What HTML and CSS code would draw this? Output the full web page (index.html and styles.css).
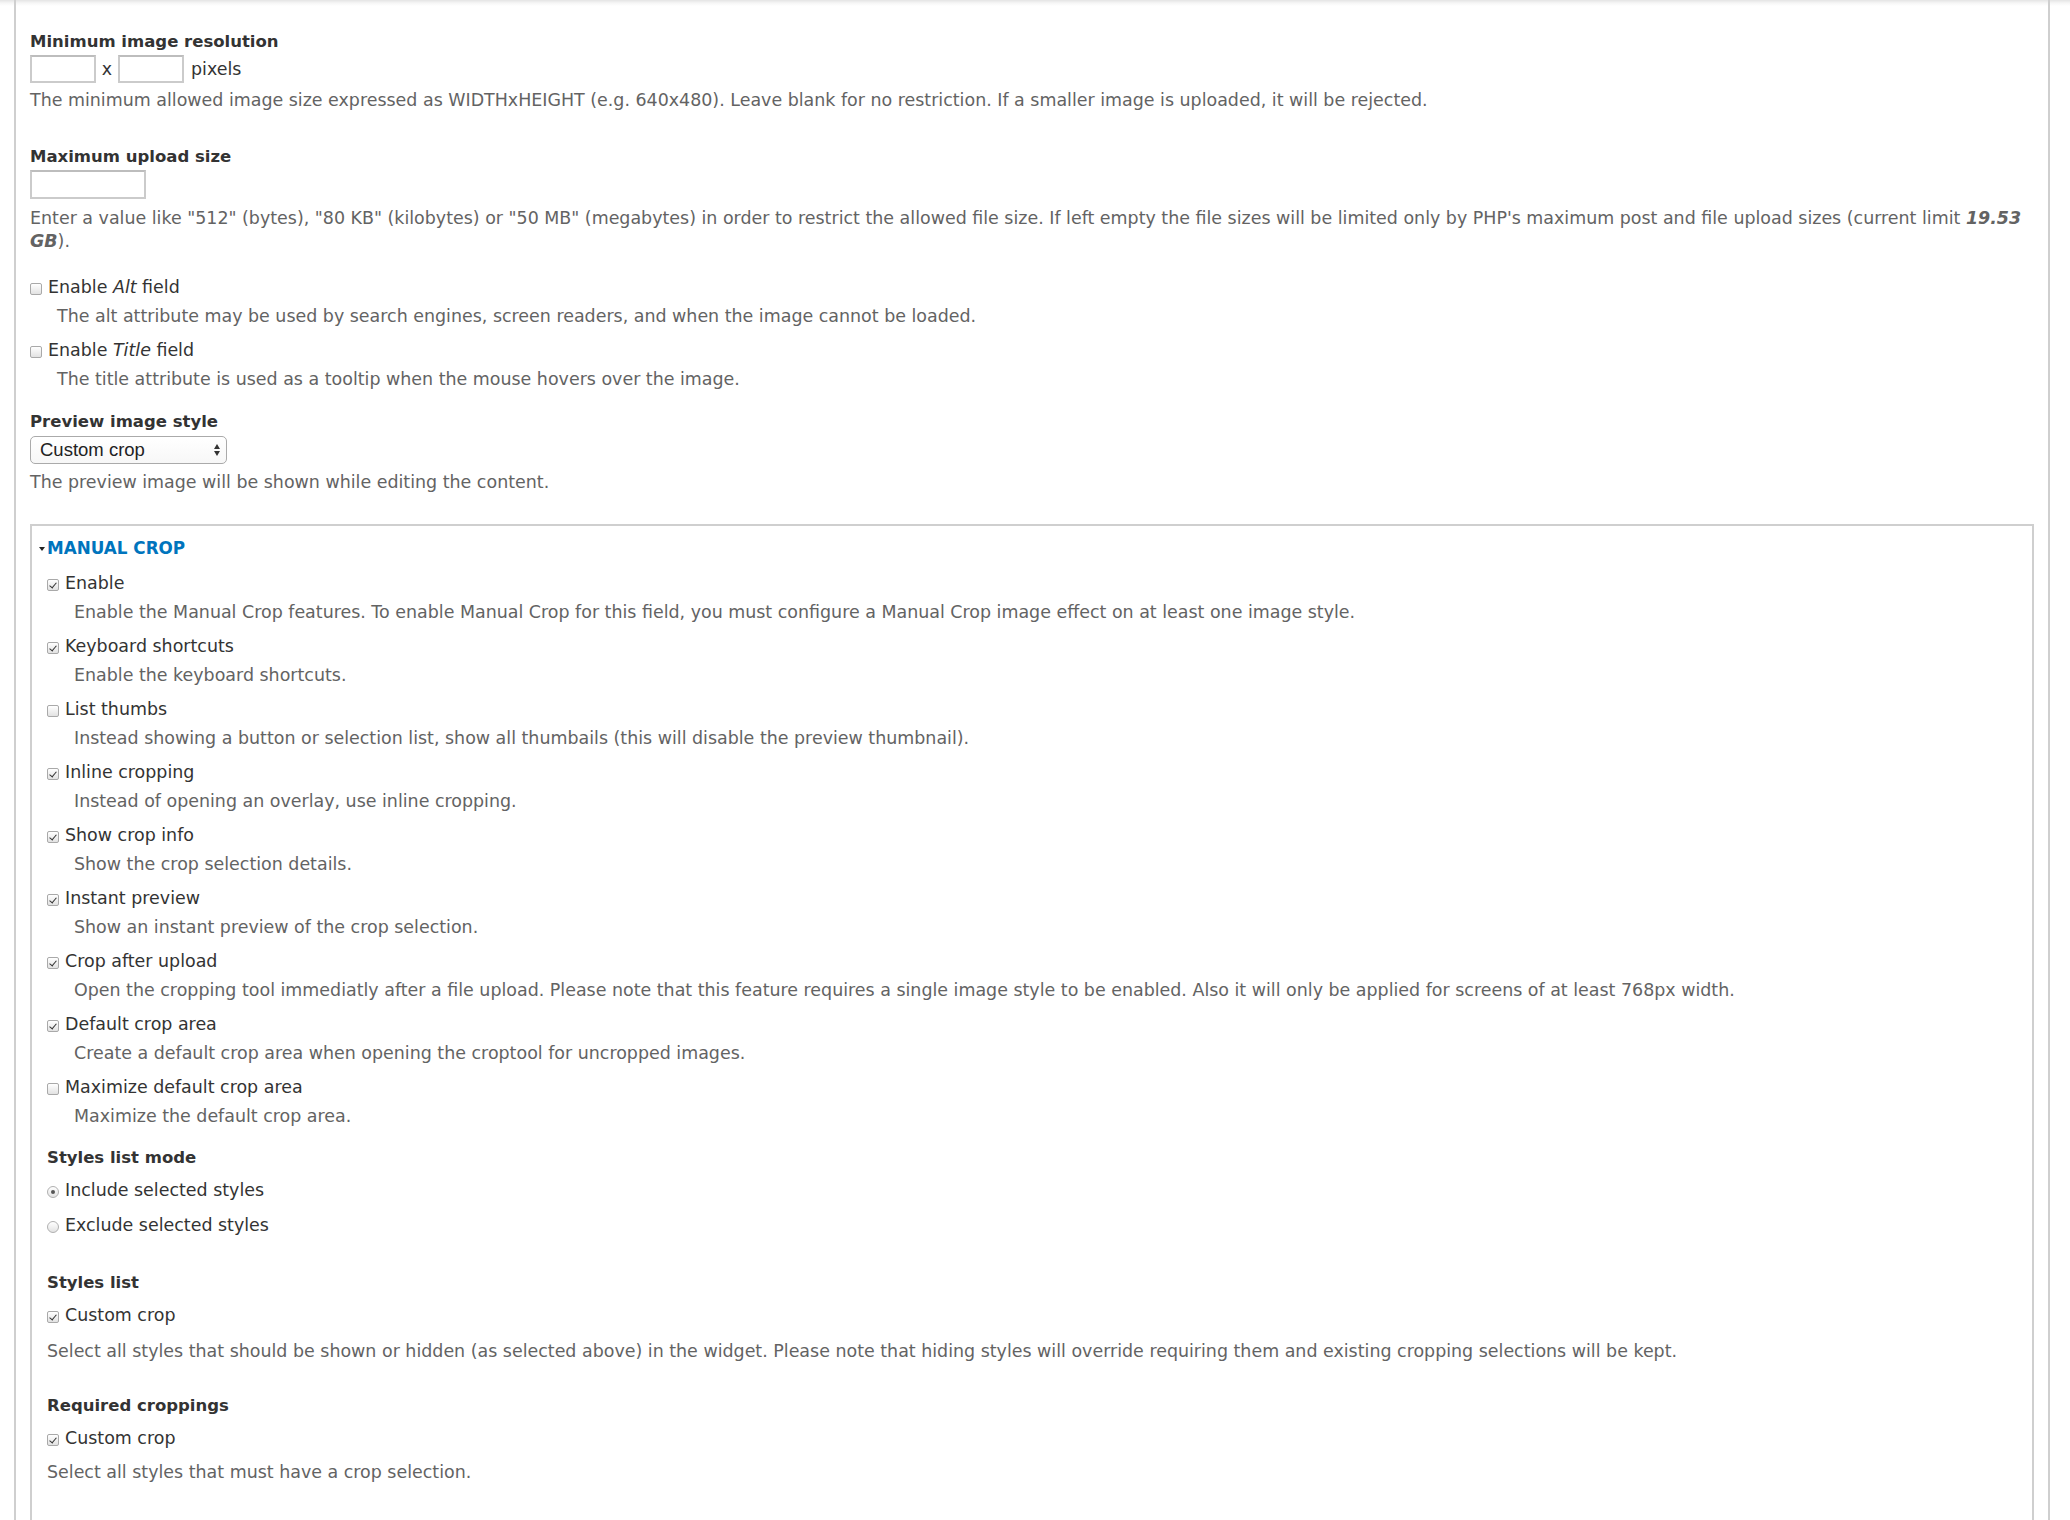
FILE: index.html
```html
<!DOCTYPE html>
<html lang="en">
<head>
<meta charset="utf-8">
<title>Image field settings</title>
<link rel="stylesheet" href="styles.css">
</head>
<body>
<div class="page">
  <div class="item">
    <div class="title">Minimum image resolution</div>
    <div class="res-row">
      <span class="input input-sm"></span>
      <span class="times">x</span>
      <span class="input input-sm"></span>
      <span class="unit">pixels</span>
    </div>
    <div class="desc gap-6">The minimum allowed image size expressed as WIDTHxHEIGHT (e.g. 640x480). Leave blank for no restriction. If a smaller image is uploaded, it will be rejected.</div>
  </div>

  <div class="item gap-35">
    <div class="title">Maximum upload size</div>
    <span class="input input-md"></span>
    <div class="desc wrap gap-8">Enter a value like "512" (bytes), "80 KB" (kilobytes) or "50 MB" (megabytes) in order to restrict the allowed file size. If left empty the file sizes will be limited only by PHP's maximum post and file upload sizes (current limit <em class="strong">19.53</em> <em class="strong">GB</em>).</div>
  </div>

  <div class="check-item gap-24">
    <div class="check"><span class="box"></span><span class="lbl">Enable <em>Alt</em> field</span></div>
    <div class="desc sub">The alt attribute may be used by search engines, screen readers, and when the image cannot be loaded.</div>
  </div>
  <div class="check-item gap-12">
    <div class="check"><span class="box"></span><span class="lbl">Enable <em>Title</em> field</span></div>
    <div class="desc sub">The title attribute is used as a tooltip when the mouse hovers over the image.</div>
  </div>

  <div class="item gap-21">
    <div class="title">Preview image style</div>
    <div class="select"><span class="select-text">Custom crop</span><span class="arrows"><span class="up"></span><span class="down"></span></span></div>
    <div class="desc gap-7">The preview image will be shown while editing the content.</div>
  </div>

  <div class="fieldset">
    <div class="legend"><span class="tri"></span>MANUAL CROP</div>

    <div class="check-item gap-13">
      <div class="check"><span class="box on"></span><span class="lbl">Enable</span></div>
      <div class="desc sub">Enable the Manual Crop features. To enable Manual Crop for this field, you must configure a Manual Crop image effect on at least one image style.</div>
    </div>
    <div class="check-item gap-12">
      <div class="check"><span class="box on"></span><span class="lbl">Keyboard shortcuts</span></div>
      <div class="desc sub">Enable the keyboard shortcuts.</div>
    </div>
    <div class="check-item gap-12">
      <div class="check"><span class="box"></span><span class="lbl">List thumbs</span></div>
      <div class="desc sub">Instead showing a button or selection list, show all thumbails (this will disable the preview thumbnail).</div>
    </div>
    <div class="check-item gap-12">
      <div class="check"><span class="box on"></span><span class="lbl">Inline cropping</span></div>
      <div class="desc sub">Instead of opening an overlay, use inline cropping.</div>
    </div>
    <div class="check-item gap-12">
      <div class="check"><span class="box on"></span><span class="lbl">Show crop info</span></div>
      <div class="desc sub">Show the crop selection details.</div>
    </div>
    <div class="check-item gap-12">
      <div class="check"><span class="box on"></span><span class="lbl">Instant preview</span></div>
      <div class="desc sub">Show an instant preview of the crop selection.</div>
    </div>
    <div class="check-item gap-12">
      <div class="check"><span class="box on"></span><span class="lbl">Crop after upload</span></div>
      <div class="desc sub">Open the cropping tool immediatly after a file upload. Please note that this feature requires a single image style to be enabled. Also it will only be applied for screens of at least 768px width.</div>
    </div>
    <div class="check-item gap-12">
      <div class="check"><span class="box on"></span><span class="lbl">Default crop area</span></div>
      <div class="desc sub">Create a default crop area when opening the croptool for uncropped images.</div>
    </div>
    <div class="check-item gap-12">
      <div class="check"><span class="box"></span><span class="lbl">Maximize default crop area</span></div>
      <div class="desc sub">Maximize the default crop area.</div>
    </div>

    <div class="item gap-20">
      <div class="title">Styles list mode</div>
      <div class="check gap-10"><span class="radio on"></span><span class="lbl">Include selected styles</span></div>
      <div class="check gap-13"><span class="radio"></span><span class="lbl">Exclude selected styles</span></div>
    </div>

    <div class="item gap-36">
      <div class="title">Styles list</div>
      <div class="check gap-10"><span class="box on"></span><span class="lbl">Custom crop</span></div>
      <div class="desc gap-14">Select all styles that should be shown or hidden (as selected above) in the widget. Please note that hiding styles will override requiring them and existing cropping selections will be kept.</div>
    </div>

    <div class="item gap-33">
      <div class="title">Required croppings</div>
      <div class="check gap-10"><span class="box on"></span><span class="lbl">Custom crop</span></div>
      <div class="desc gap-12">Select all styles that must have a crop selection.</div>
    </div>
  </div>
</div>
</body>
</html>
```

FILE: styles.css
```css
html {
  background: #fff linear-gradient(to bottom, #e4e4e4 0, #f6f6f6 3px, #fff 6px) no-repeat;
  background-size: 100% 8px;
}

body {
  margin: 0;
  font-family: "DejaVu Sans", "Open Sans", sans-serif;
  font-size: 17.45px;
  line-height: 22px;
  color: #333;
}

.page {
  margin-left: 14px;
  width: 2004px;
  min-height: 1520px;
  box-sizing: content-box;
  border-left: 2px solid #cfcfcf;
  border-right: 2px solid #cfcfcf;
  padding: 31px 14px 0 14px;
}

.item, .check-item { display: block; }

.gap-6 { margin-top: 6px; }
.gap-7 { margin-top: 7px; }
.gap-8 { margin-top: 8px; }
.gap-10 { margin-top: 10px; }
.gap-12 { margin-top: 12px; }
.gap-13 { margin-top: 13px; }
.gap-14 { margin-top: 14px; }
.gap-20 { margin-top: 20px; }
.gap-21 { margin-top: 21px; }
.gap-24 { margin-top: 24px; }
.gap-33 { margin-top: 33px; }
.gap-35 { margin-top: 35px; }
.gap-36 { margin-top: 36px; }

.title {
  font-weight: 700;
  font-size: 16.5px;
  color: #333;
}

.desc {
  color: #636363;
}

.desc.wrap {
  line-height: 22.5px;
}

.desc .strong {
  font-weight: 700;
  font-style: italic;
  line-height: 1;
}

.sub {
  margin-top: 7px;
  margin-left: 27px;
}

.res-row {
  display: flex;
  align-items: center;
  margin-top: 2px;
  height: 28px;
}

.input {
  display: block;
  box-sizing: border-box;
  height: 28px;
  border: 2px solid #cbcbcb;
  border-top-color: #bdbdbd;
  background: #fff;
}

.input-sm { width: 66px; }

.input-md {
  width: 116px;
  height: 29px;
  margin-top: 2px;
}

.times {
  width: 22px;
  text-align: center;
  color: #333;
}

.unit {
  margin-left: 7px;
  color: #333;
}

.check {
  display: flex;
  align-items: center;
  color: #333;
}

.box {
  flex: none;
  position: relative;
  width: 12px;
  height: 12px;
  box-sizing: border-box;
  margin-top: 4px;
  margin-right: 6px;
  border: 1px solid #a9a9a9;
  border-radius: 2px;
  background: linear-gradient(to bottom, #ffffff, #e2e2e2);
}

.box.on::after {
  content: "";
  position: absolute;
  left: 3px;
  top: 0.5px;
  width: 3px;
  height: 6px;
  border-right: 1.5px solid #333;
  border-bottom: 1.5px solid #333;
  transform: rotate(40deg);
}

.radio {
  flex: none;
  position: relative;
  width: 12px;
  height: 12px;
  box-sizing: border-box;
  margin-top: 4px;
  margin-right: 6px;
  border: 1px solid #b0b0b0;
  border-radius: 50%;
  background: linear-gradient(to bottom, #ffffff, #e2e2e2);
}

.radio.on::after {
  content: "";
  position: absolute;
  left: 3px;
  top: 3px;
  width: 4px;
  height: 4px;
  border-radius: 50%;
  background: #555;
}

.select {
  display: flex;
  align-items: center;
  justify-content: space-between;
  box-sizing: border-box;
  width: 197px;
  height: 28px;
  margin-top: 3px;
  padding: 0 6px 0 9px;
  border: 1px solid #aaa;
  border-radius: 5px;
  background: linear-gradient(to bottom, #fff, #f7f7f7);
  font-family: "Liberation Sans", Arial, sans-serif;
  font-size: 18.5px;
  color: #222;
}

.arrows {
  display: flex;
  flex-direction: column;
  gap: 2px;
}

.up, .down {
  width: 0;
  height: 0;
  border-left: 3.5px solid transparent;
  border-right: 3.5px solid transparent;
}

.up { border-bottom: 5px solid #333; }
.down { border-top: 5px solid #333; }

.fieldset {
  margin-top: 31px;
  border: 2px solid #cfcfcf;
  border-bottom: none;
  padding: 11px 15px 80px 15px;
}

.legend {
  display: flex;
  align-items: center;
  margin-left: -8px;
  font-weight: 700;
  font-size: 16.8px;
  color: #0074bd;
  text-transform: uppercase;
}

.tri {
  width: 0;
  height: 0;
  margin-top: 2px;
  margin-right: 2px;
  border-left: 3px solid transparent;
  border-right: 3px solid transparent;
  border-top: 4px solid #222;
}
```
